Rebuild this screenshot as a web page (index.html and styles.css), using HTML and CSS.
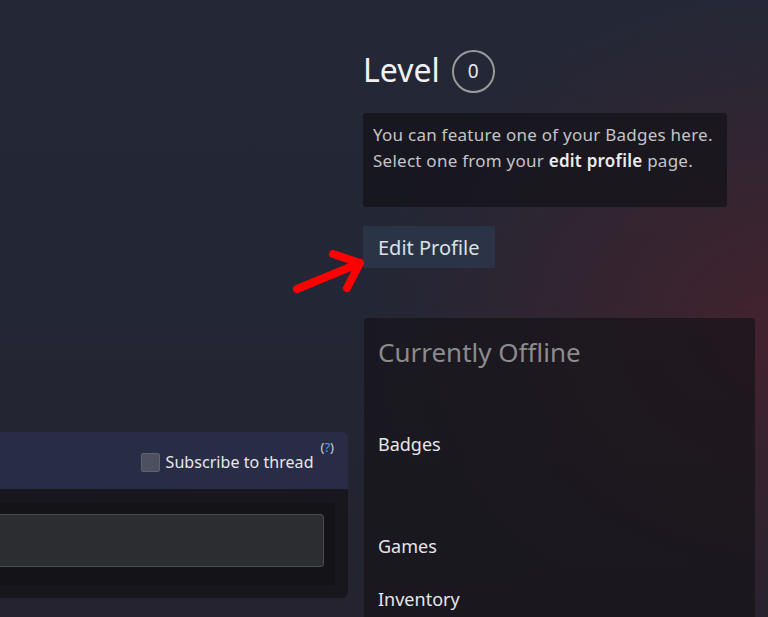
FILE: index.html
```html
<!DOCTYPE html>
<html>
<head>
<meta charset="utf-8">
<link rel="stylesheet" href="styles.css">
</head>
<body>
<div class="page">
  <div class="left">
    <div class="comment">
      <div class="comment-head">
        <label class="subscribe"><span class="check"></span>Subscribe to thread</label>
        <span class="help">(<span class="q">?</span>)</span>
      </div>
      <div class="comment-body">
        <div class="comment-inner">
          <div class="textarea"></div>
        </div>
      </div>
    </div>
  </div>
  <div class="right">
    <div class="level">
      <span class="level-label">Level</span>
      <span class="level-num">0</span>
    </div>
    <div class="badge-box">
      <p class="line">You can feature one of your Badges here.</p>
      <p class="line">Select one from your <b>edit profile</b> page.</p>
    </div>
    <div class="btn-row">
      <span class="edit-btn">Edit Profile</span>
      <svg class="arrow" width="80" height="50" viewBox="0 0 80 50">
        <path d="M8 42 L71 16 M44 7 L71 16 L58 41" fill="none" stroke="#f00" stroke-width="8" stroke-linecap="round" stroke-linejoin="round"/>
      </svg>
    </div>
    <div class="panel">
      <div class="status">Currently Offline</div>
      <div class="link badges">Badges</div>
      <div class="link games">Games</div>
      <div class="link inv">Inventory</div>
    </div>
  </div>
</div>
</body>
</html>
```

FILE: styles.css
```css
html, body {
  margin: 0;
  padding: 0;
  height: 617px;
  overflow: hidden;
}
body {
  font-family: "Noto Sans", "Open Sans", sans-serif;
  background:
    radial-gradient(ellipse 420px 340px at 790px 330px, rgba(72,34,44,0.85), rgba(72,34,44,0) 100%),
    linear-gradient(180deg, #242836 0%, #232634 50%, #24232f 100%);
  color: #fff;
}
.page {
  display: flex;
  height: 617px;
}
.left {
  width: 348px;
  display: flex;
  flex-direction: column;
  justify-content: flex-end;
  padding-bottom: 19px;
  box-sizing: border-box;
}
.comment {
  height: 166px;
  display: flex;
  flex-direction: column;
  border-radius: 0 6px 6px 0;
  overflow: hidden;
  background: #18171d;
}
.comment-head {
  height: 57px;
  background: linear-gradient(90deg, #262d45 0%, #2a2c46 100%);
  display: flex;
  align-items: flex-start;
  justify-content: flex-end;
  padding-right: 14px;
}
.subscribe {
  display: flex;
  align-items: center;
  margin-top: 19px;
  font-size: 16px;
  letter-spacing: 0.05px;
  color: #e6e8ec;
}
.check {
  width: 17px;
  height: 17px;
  background: #4d505f;
  border: 1px solid #60636f;
  border-radius: 2px;
  margin-right: 6px;
}
.help {
  font-size: 13px;
  color: #c6d4df;
  margin-left: 7px;
  margin-top: 6px;
}
.help .q {
  color: #4fa3dc;
}
.comment-body {
  flex: 1;
  padding: 14px 13px 13px 0;
}
.comment-inner {
  height: 82px;
  background: #131318;
  padding: 11px 11px 0 0;
  box-sizing: border-box;
}
.textarea {
  height: 53px;
  box-sizing: border-box;
  background: #2c2d31;
  border: 1px solid #4b4c50;
  border-left: none;
  border-radius: 0 4px 4px 0;
}
.right {
  margin-left: 15px;
  width: 392px;
  display: flex;
  flex-direction: column;
}
.level {
  margin-top: 49px;
  display: flex;
  align-items: center;
  height: 44px;
}
.level-label {
  font-size: 32px;
  color: #f2f2f2;
  margin-right: 12px;
  margin-top: -4px;
}
.level-num {
  width: 39px;
  height: 39px;
  border: 2px solid #9a9a9a;
  border-radius: 50%;
  display: flex;
  align-items: center;
  justify-content: center;
  font-size: 19px;
  color: #e8e8e8;
}
.badge-box {
  margin-top: 20px;
  width: 364px;
  height: 94px;
  box-sizing: border-box;
  background: rgba(20, 19, 25, 0.75);
  border-radius: 3px;
  padding: 9px 10px;
  font-size: 17px;
  letter-spacing: 0.25px;
  line-height: 26px;
  color: #c4c4c6;
}
.line {
  margin: 0;
  white-space: nowrap;
}
.badge-box b {
  font-weight: 600;
  color: #ececec;
}
.btn-row {
  margin-top: 19px;
  position: relative;
  height: 42px;
}
.edit-btn {
  display: inline-flex;
  align-items: center;
  height: 42px;
  padding: 0 15px 0 15px;
  background: #2b3446;
  border-radius: 2px;
  font-size: 20px;
  color: #dce0e4;
}
.arrow {
  position: absolute;
  left: -74px;
  top: 21px;
}
.panel {
  margin-top: 50px;
  margin-left: 1px;
  flex: 1;
  background: rgba(22, 19, 25, 0.72);
  border-radius: 3px 3px 0 0;
  padding: 0 14px;
}
.status {
  font-size: 26px;
  color: #8b8b8d;
  margin-top: 17px;
  line-height: 34px;
}
.link {
  font-size: 18px;
  color: #e6e6e8;
  line-height: 26px;
}
.badges { margin-top: 62px; }
.games { margin-top: 76px; }
.inv { margin-top: 27px; }
```
